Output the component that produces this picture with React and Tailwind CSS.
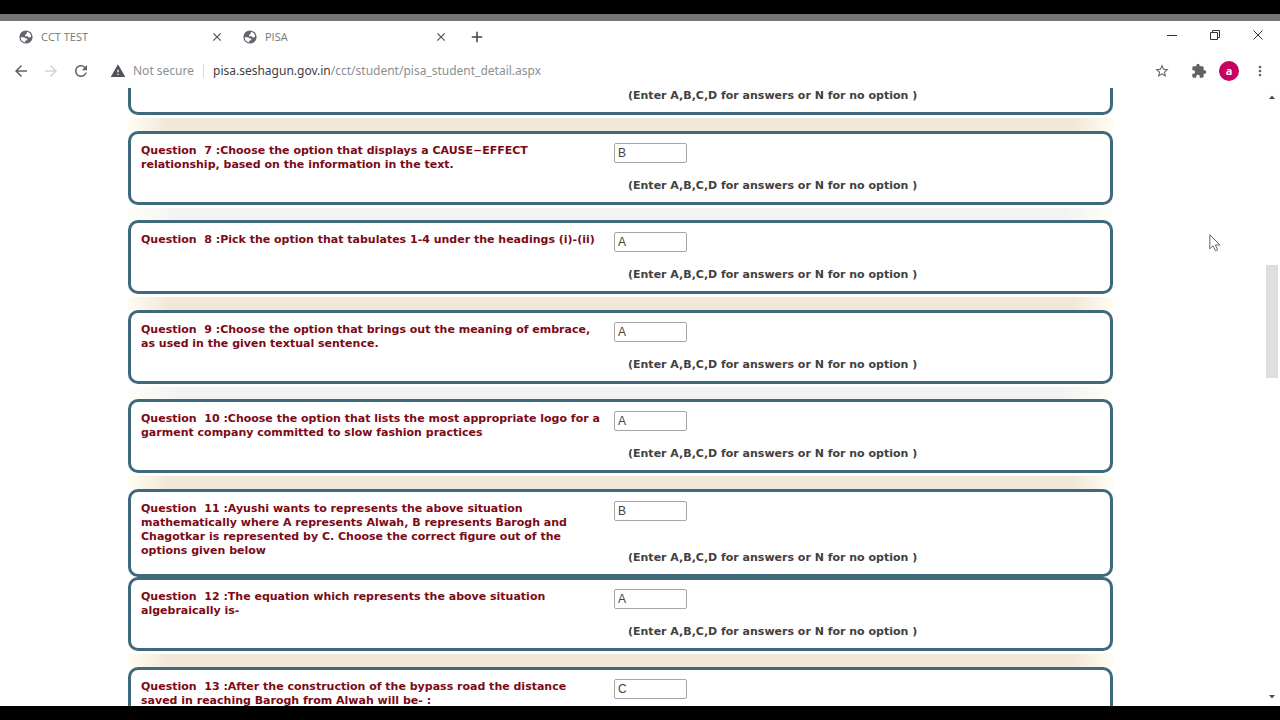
import React, { useState } from 'react';
import { MdArrowBack, MdArrowForward, MdRefresh, MdWarning, MdStarBorder, MdExtension, MdMoreVert, MdClose, MdAdd } from 'react-icons/md';

const tabs = [
  { id: 1, title: 'CCT TEST' },
  { id: 2, title: 'PISA' },
];

const questions = [
  { no: 7, text: 'Choose the option that displays a CAUSE−EFFECT relationship, based on the information in the text.', answer: 'B', band: 'gray' },
  { no: 8, text: 'Pick the option that tabulates 1-4 under the headings (i)-(ii)', answer: 'A', band: 'warm' },
  { no: 9, text: 'Choose the option that brings out the meaning of embrace, as used in the given textual sentence.', answer: 'A', band: 'gray' },
  { no: 10, text: 'Choose the option that lists the most appropriate logo for a garment company committed to slow fashion practices', answer: 'A', band: 'warm' },
  { no: 11, text: 'Ayushi wants to represents the above situation mathematically where A represents Alwah, B represents Barogh and Chagotkar is represented by C. Choose the correct figure out of the options given below', answer: 'B', band: 'none' },
  { no: 12, text: 'The equation which represents the above situation algebraically is-', answer: 'A', band: 'warm' },
  { no: 13, text: 'After the construction of the bypass road the distance saved in reaching Barogh from Alwah will be- :', answer: 'C', band: 'none', hint: false },
];

const Hint = () => (
  <p className="pl-[14px] text-[11px] leading-[14px] font-bold text-[#414141]">
    (Enter A,B,C,D for answers or N for no option )
  </p>
);

const Band = ({ tone }) => {
  if (tone === 'none') return null;
  return tone === 'gray' ? (
    <div className="h-[15px] pt-[3px]">
      <div className="h-full bg-[linear-gradient(to_right,#fffef6,#f3f3f3_5%,#f3f3f3_95%,#fffef6)]" />
    </div>
  ) : (
    <div className="h-4 pt-[3px]">
      <div className="h-full bg-[linear-gradient(to_right,#fffdf2,#f2e8da_4%,#f2e8da_96%,#fffdf2)]" />
    </div>
  );
};

const QuestionCard = ({ no, text, answer, hint = true }) => {
  const [value, setValue] = useState(answer);
  const id = `question-${no}`;

  return (
    <div className="flex min-h-[74px] rounded-[10px] border-[3px] border-[#3f6a7b] bg-white pt-[9px] pl-[10px] pb-[9px]">
      <label htmlFor={id} className="w-[473px] shrink-0 pt-px pr-[10px] pb-[7px] text-[11px] leading-[14px] font-bold whitespace-pre-wrap text-[#7c0a16]">
        {`Question  ${no} :${text}`}
      </label>
      <div className="flex flex-1 flex-col justify-between">
        <input
          id={id}
          type="text"
          value={value}
          onChange={(e) => setValue(e.target.value)}
          className="h-5 w-[73px] rounded-xs border border-[#a6a6a6] bg-white px-[3px] font-['Liberation_Sans'] text-[12px] text-[#444]"
        />
        {hint && <Hint />}
      </div>
    </div>
  );
};

const GlobeIcon = () => (
  <svg className="size-[14px]" viewBox="0 0 14 14">
    <circle cx="7" cy="7" r="6.600" fill="#63676b" />
    <path d="M8.300 1.800c2.200.6 3.700 2.400 3.900 4.500-.7 1-1.500 1.500-2.500 1.200L8.800 6.300H6.400l-.6-1.200 1.400-.7.400-1.200z" fill="#fff" />
    <path d="M1.700 7.200h3.500l1.500 1.300 1.800.3-.6 1.500-1.500.5-.6 1.600C3.400 12 1.700 9.800 1.700 7.200z" fill="#fff" />
  </svg>
);

const Tab = ({ title }) => (
  <div className="flex w-56 items-center pl-[19px]">
    <GlobeIcon />
    <span className="flex-1 pl-2 font-['Open_Sans'] text-[11px] text-[#74777b]">{title}</span>
    <button type="button" aria-label="Close tab">
      <MdClose className="size-[14px] text-[#4d5054]" />
    </button>
  </div>
);

const TitleBar = () => (
  <div className="flex h-8 items-center">
    {tabs.map((tab) => (
      <Tab key={tab.id} title={tab.title} />
    ))}
    <button type="button" aria-label="New tab" className="ml-5">
      <MdAdd className="size-[18px] text-[#3f4246]" />
    </button>
    <div className="ml-auto flex items-center gap-[33px] pr-[17px] pb-1 text-[#333]">
      <button type="button" aria-label="Minimize">
        <svg className="size-[10px]" viewBox="0 0 10 10" fill="none" stroke="currentColor"><path d="M0 5.500h10" /></svg>
      </button>
      <button type="button" aria-label="Restore">
        <svg className="size-[10px]" viewBox="0 0 10 10" fill="none" stroke="currentColor"><path d="M.5 2.500h7v7h-7zM2.500 2.500v-2h7v7h-2" /></svg>
      </button>
      <button type="button" aria-label="Close">
        <svg className="size-[10px]" viewBox="0 0 10 10" fill="none" stroke="currentColor"><path d="M.5.5l9 9M9.500.5l-9 9" /></svg>
      </button>
    </div>
  </div>
);

const Toolbar = () => (
  <div className="flex h-[35px] items-center pr-3 pl-3 font-['Noto_Sans'] text-[12px] text-[#5f6368]">
    <button type="button" aria-label="Back"><MdArrowBack className="size-[18px]" /></button>
    <button type="button" aria-label="Forward" className="ml-3"><MdArrowForward className="size-[18px] text-[#d2d4d6]" /></button>
    <button type="button" aria-label="Reload" className="ml-3"><MdRefresh className="size-[18px]" /></button>
    <MdWarning className="ml-5 size-4 text-[#505357]" />
    <span className="ml-[7px] text-[#8b8e92]">Not secure</span>
    <span className="mx-[9px] h-[14px] w-px bg-[#d5d7d9]" />
    <span className="text-[#8b8e92]">
      <span className="text-[#3c4043]">pisa.seshagun.gov.in</span>/cct/student/pisa_student_detail.aspx
    </span>
    <div className="ml-auto flex items-center">
      <button type="button" aria-label="Bookmark"><MdStarBorder className="size-4" /></button>
      <button type="button" aria-label="Extensions" className="ml-[21px]"><MdExtension className="size-4" /></button>
      <button type="button" aria-label="Profile" className="ml-3 flex size-5 items-center justify-center rounded-full bg-[#c8005f] text-[11px] leading-none font-bold text-white">a</button>
      <button type="button" aria-label="Menu" className="ml-[13px]"><MdMoreVert className="size-4" /></button>
    </div>
  </div>
);

const Scrollbar = () => (
  <div className="flex w-4 shrink-0 flex-col items-center py-[5px]">
    <svg className="h-2 w-[6px]" viewBox="0 0 6 8" fill="#4c4c4c"><path d="M0 6l3-3.500 3 3.500z" /></svg>
    <div className="mt-[164px] h-[113px] w-3 bg-[#dedede]" />
    <svg className="mt-auto h-2 w-[6px]" viewBox="0 0 6 8" fill="#4c4c4c"><path d="M0 2l3 3.500 3-3.500z" /></svg>
  </div>
);

export default function App() {
  return (
    <div className="flex h-screen flex-col overflow-hidden border-t-[14px] border-b-[14px] border-black bg-white">
      <div className="h-[7px] shrink-0 bg-[#757579]" />
      <header className="shrink-0">
        <TitleBar />
        <Toolbar />
      </header>
      <div className="flex min-h-0 flex-1">
        <main className="min-w-0 flex-1 overflow-hidden pr-[151px] pl-32 font-['DejaVu_Sans']">
          <div className="h-[27px] rounded-b-[10px] border-[3px] border-t-0 border-[#3f6a7b] pt-px pl-[483px]">
            <Hint />
          </div>
          <Band tone="warm" />
          {questions.map((q) => (
            <React.Fragment key={q.no}>
              <QuestionCard {...q} />
              <Band tone={q.band} />
            </React.Fragment>
          ))}
        </main>
        <Scrollbar />
      </div>
      <svg className="pointer-events-none absolute top-[234px] left-[1209px] h-[18px] w-3" viewBox="0 0 12 18" fill="#fff" stroke="#666"><path d="M.8.8v14l3.200-3 2.500 5 2.200-1-2.400-4.800h4.600z" /></svg>
    </div>
  );
}
